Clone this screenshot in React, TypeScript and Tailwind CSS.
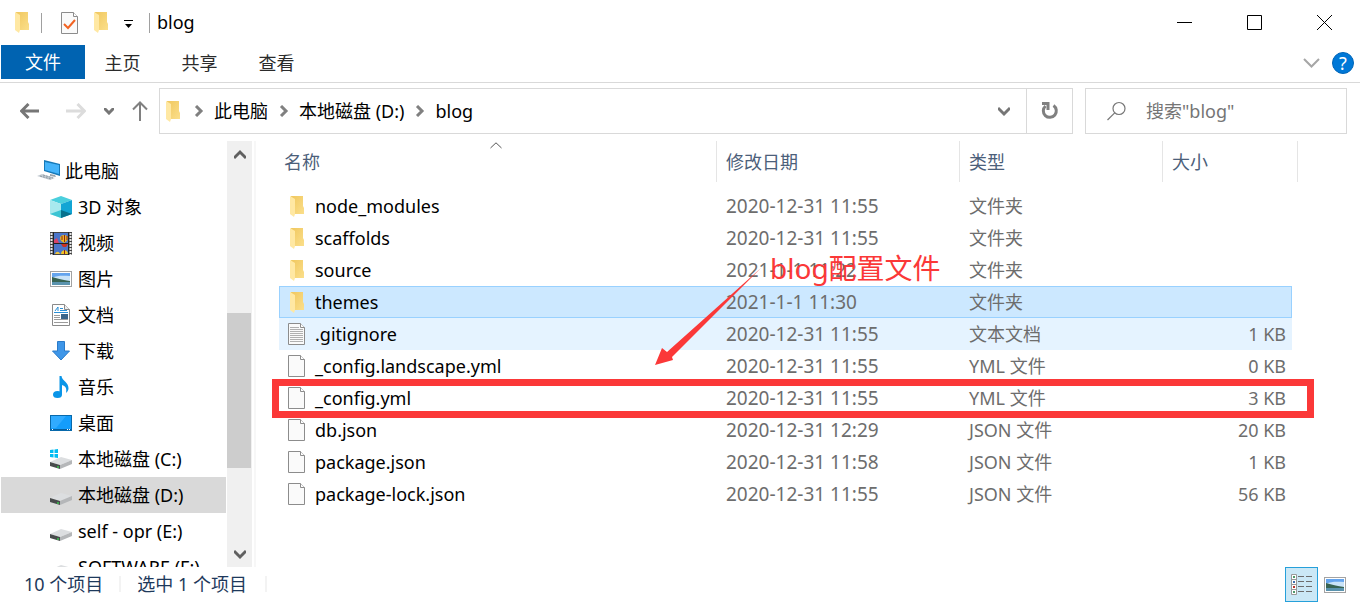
import type { ReactNode } from 'react';

interface FileRow {
  name: string;
  date: string;
  type: string;
  size?: string;
  icon: 'folder' | 'text' | 'blank';
  state?: 'selected' | 'hover' | 'marked';
}

const files: FileRow[] = [
  { name: 'node_modules', date: '2020-12-31 11:55', type: '文件夹', icon: 'folder' },
  { name: 'scaffolds', date: '2020-12-31 11:55', type: '文件夹', icon: 'folder' },
  { name: 'source', date: '2021-1-1 11:22', type: '文件夹', icon: 'folder' },
  { name: 'themes', date: '2021-1-1 11:30', type: '文件夹', icon: 'folder', state: 'selected' },
  { name: '.gitignore', date: '2020-12-31 11:55', type: '文本文档', size: '1 KB', icon: 'text', state: 'hover' },
  { name: '_config.landscape.yml', date: '2020-12-31 11:55', type: 'YML 文件', size: '0 KB', icon: 'blank' },
  { name: '_config.yml', date: '2020-12-31 11:55', type: 'YML 文件', size: '3 KB', icon: 'blank', state: 'marked' },
  { name: 'db.json', date: '2020-12-31 12:29', type: 'JSON 文件', size: '20 KB', icon: 'blank' },
  { name: 'package.json', date: '2020-12-31 11:58', type: 'JSON 文件', size: '1 KB', icon: 'blank' },
  { name: 'package-lock.json', date: '2020-12-31 11:55', type: 'JSON 文件', size: '56 KB', icon: 'blank' },
];

function FolderIcon() {
  return (
    <svg width="14" height="21" viewBox="0 0 14 21" className="shrink-0">
      <defs>
        <linearGradient id="folderBack" x1="0" y1="0" x2="1" y2="1">
          <stop offset="0" stopColor="#f0c75e" />
          <stop offset="1" stopColor="#fbdf8b" />
        </linearGradient>
      </defs>
      <path d="M1 0H13V10L14 12V18H3Z" fill="url(#folderBack)" />
      <path d="M0 0L5 3V18L4 21L0 18Z" fill="#ffe8a3" />
    </svg>
  );
}

function PageIcon({ lines = false, check = false }: { lines?: boolean; check?: boolean }) {
  return (
    <svg width="17" height="22" viewBox="0 0 17 22" className="shrink-0" fill="none">
      <path d="M.5 .5H12.5L16.5 4.5V21.5H.5Z" fill="#fafafa" stroke="#8c8c8c" />
      <path d="M12.5 .5V4.5H16.5" fill="#fff" stroke="#8c8c8c" />
      {lines && <path d="M2 4.5H11M2 6.5H15M2 8.5H15M2 10.5H15M2 12.5H15M2 14.5H15M2 16.5H15M2 18.5H15" stroke="#b0b0b0" />}
      {check && <path d="M3 12L7 16L14 8" stroke="#f26322" strokeWidth="2" />}
    </svg>
  );
}

function Chevron({ dir, className = '' }: { dir: 'right' | 'down' | 'up'; className?: string }) {
  const paths = { right: 'M3 1L8 6L3 11', down: 'M0 3L6 9L12 3', up: 'M0 9L6 3L12 9' };
  return (
    <svg width="12" height="12" viewBox="0 0 12 12" fill="none" className={`shrink-0 ${className}`}>
      <path d={paths[dir]} stroke="currentColor" strokeWidth="3" />
    </svg>
  );
}

function PictureIcon() {
  return (
    <svg width="22" height="16" viewBox="0 0 22 16">
      <rect x=".5" y=".5" width="21" height="15" fill="#fff" stroke="#a3a3a3" />
      <rect x="2" y="2" width="18" height="12" fill="#64a4ee" />
      <path d="M2 7C8 4 14 5 20 5V11H2Z" fill="#c9e3f8" />
      <path d="M2 6C7 7 11 9 20 10V11H2Z" fill="#376352" />
      <path d="M2 11H20V14H2Z" fill="#5a93ae" />
    </svg>
  );
}

function DriveIcon({ windows = false }: { windows?: boolean }) {
  return (
    <svg width="22" height="20" viewBox="0 0 22 20">
      <path d="M0 13L11 8L22 11L10 16Z" fill="#dcdee0" />
      <path d="M0 13L10 16V20L0 17Z" fill="#484b4c" />
      <path d="M10 16L22 11V15L10 20Z" fill="#b5b7b9" />
      <path d="M7 17H9V19H7Z" fill="#3ba64b" />
      {windows && <path d="M0 1L3.5 .5V4H0ZM4.5 .4L8 0V4H4.5ZM0 5H3.5V8.5L0 8ZM4.5 5H8V9L4.5 8.6Z" fill="#00bcf2" />}
    </svg>
  );
}

function ComputerIcon() {
  return (
    <svg width="24" height="22" viewBox="0 0 24 22">
      <path d="M7 0L23 4V16L7 11Z" fill="#1679b8" />
      <path d="M8 2L22 5V14L8 10Z" fill="#45b4fa" />
      <path d="M13 14L18 15L19 17L13 16Z" fill="#9aa4ac" />
      <path d="M0 16L5 14L18 18L13 20Z" fill="#c5ccd2" />
      <path d="M3 16L14 19M6 15L16 18" stroke="#8c99a3" strokeDasharray="2 1" />
    </svg>
  );
}

function CubeIcon() {
  return (
    <svg width="22" height="22" viewBox="0 0 22 22">
      <path d="M11 0L22 4L11 8L0 4Z" fill="#4bcfdd" />
      <path d="M0 4L11 8V22L0 18Z" fill="#a8e9ee" />
      <path d="M11 8L22 4V18L11 22Z" fill="#12a5d4" />
      <path d="M0 18L11 14V22Z" fill="#3bc4d3" />
      <path d="M11 14L22 18L11 22Z" fill="#06718d" />
    </svg>
  );
}

function VideoIcon() {
  return (
    <svg width="22" height="23" viewBox="0 0 22 23">
      <rect width="22" height="23" fill="#444" />
      <path d="M1.5 1V23M20.5 1V23" stroke="#e8e8e8" strokeWidth="2" strokeDasharray="2 1" />
      <rect x="4" y="1" width="14" height="10" fill="#4b75c8" />
      <rect x="4" y="12" width="14" height="10" fill="#4b75c8" />
      <path d="M4 8L7 6L9 11H4Z" fill="#d5446a" />
      <path d="M10 6C10 2 18 2 18 6C18 8 16 10 14 11C12 10 10 8 10 6Z" fill="#e9b520" />
      <path d="M12 4V8M14.5 3V10M17 4V8" stroke="#8f231b" />
      <path d="M11 12H18L16 15H13Z" fill="#c93121" />
      <path d="M11 22C11 17 18 17 18 22Z" fill="#f0c423" />
      <path d="M14.500 18V22" stroke="#8f231b" />
      <path d="M5 22C6 19 9 19 10 22Z" fill="#ecc43e" />
      <path d="M3.5 0V23M18.5 0V23M3 11.5H19" stroke="#222" />
    </svg>
  );
}

function DocumentIcon() {
  return (
    <svg width="18" height="22" viewBox="0 0 18 22">
      <path d="M.5 .5H12.5L17.5 5.5V21.5H.5Z" fill="#fff" stroke="#8a8a8a" />
      <path d="M12.5 .5V5.5H17.5" fill="#eee" stroke="#8a8a8a" />
      <path d="M3 7L6 3V7M8 4.5H11M8 6.5H15M2 8.5H16" fill="none" stroke="#2a8fd5" />
      <path d="M2 11.5H8M2 13.5H8M2 15.5H16M2 18.5H16" stroke="#9b9b9b" />
      <rect x="9" y="10" width="7" height="5" fill="#3a6589" />
    </svg>
  );
}

function DownloadIcon() {
  return (
    <svg width="18" height="20" viewBox="0 0 18 20">
      <path d="M5.5 .5H12.5V10H17.5L9 19L.5 10H5.5Z" fill="#3e96e8" stroke="#2a7bc9" />
    </svg>
  );
}

function MusicIcon() {
  return (
    <svg width="16" height="22" viewBox="0 0 16 22">
      <ellipse cx="4.5" cy="18.5" rx="4.5" ry="3.5" fill="#0a95e8" />
      <path d="M6.5 0H8.5C9 5 16 6 15.5 13C15 15 14 16 13 17C14 12 12.5 10 9 9V18.5H6.5Z" fill="#0a95e8" />
    </svg>
  );
}

function DesktopIcon() {
  return (
    <svg width="22" height="16" viewBox="0 0 22 16">
      <rect x=".5" y=".5" width="21" height="15" fill="#149dfb" stroke="#0869ab" />
      <path d="M1 1H16L6 13H1Z" fill="#31abff" />
      <path d="M1 14.5H21" stroke="#075d9b" />
      <path d="M2 14.5H3M17 14.5H18M19 14.5H20" stroke="#fff" />
    </svg>
  );
}

const places: { label: string; icon: ReactNode; active?: boolean }[] = [
  { label: '3D 对象', icon: <CubeIcon /> },
  { label: '视频', icon: <VideoIcon /> },
  { label: '图片', icon: <PictureIcon /> },
  { label: '文档', icon: <DocumentIcon /> },
  { label: '下载', icon: <DownloadIcon /> },
  { label: '音乐', icon: <MusicIcon /> },
  { label: '桌面', icon: <DesktopIcon /> },
  { label: '本地磁盘 (C:)', icon: <DriveIcon windows /> },
  { label: '本地磁盘 (D:)', icon: <DriveIcon />, active: true },
  { label: 'self - opr (E:)', icon: <DriveIcon /> },
  { label: 'SOFTWARE (F:)', icon: <DriveIcon /> },
];

function TitleBar() {
  return (
    <header className="flex h-[45px] shrink-0 items-center justify-between">
      <div className="flex items-center pl-[15px]">
        <FolderIcon />
        <span className="ml-3 h-5 w-px bg-[#a0a0a0]" />
        <button aria-label="属性" className="ml-[19px]"><PageIcon check /></button>
        <button aria-label="新建文件夹" className="ml-4"><FolderIcon /></button>
        <button aria-label="自定义快速访问工具栏" className="ml-4 pt-1">
          <svg width="9" height="9" viewBox="0 0 9 9"><path d="M0 0H9V1H0ZM1 4H8L4.5 8Z" /></svg>
        </button>
        <span className="ml-4 h-5 w-px bg-[#a0a0a0]" />
        <h1 className="ml-[7px] pb-0.5">blog</h1>
      </div>
      <div className="flex pr-px">
        <button aria-label="最小化" className="flex h-[45px] w-[70px] items-center justify-center">
          <svg width="15" height="15" viewBox="0 0 15 15"><path d="M0 7.5H15" stroke="#000" /></svg>
        </button>
        <button aria-label="最大化" className="flex h-[45px] w-[70px] items-center justify-center">
          <svg width="15" height="15" viewBox="0 0 15 15"><path d="M.5 .5H14.5V14.5H.5Z" fill="none" stroke="#000" /></svg>
        </button>
        <button aria-label="关闭" className="flex h-[45px] w-[70px] items-center justify-center">
          <svg width="15" height="15" viewBox="0 0 15 15"><path d="M0 0L15 15M15 0L0 15" stroke="#000" /></svg>
        </button>
      </div>
    </header>
  );
}

function Ribbon() {
  return (
    <div className="flex h-[38px] shrink-0 items-start justify-between border-b border-[#d9d9d9] pl-px">
      <div className="flex">
        <button className="h-[34px] w-[84px] bg-[#0063b1] text-white">文件</button>
        {['主页', '共享', '查看'].map((tab) => (
          <button key={tab} className="h-9 w-[77px] pr-0.5 text-[#2b2b2b]">{tab}</button>
        ))}
      </div>
      <div className="flex h-9 items-center gap-3 pr-[6px]">
        <button aria-label="展开功能区">
          <svg width="17" height="10" viewBox="0 0 17 10"><path d="M1 1L8.5 8.5L16 1" fill="none" stroke="#a6a6a6" strokeWidth="2" /></svg>
        </button>
        <button aria-label="帮助" className="h-[22px] w-[22px] rounded-full border border-[#0065b8] bg-[#0078d7] text-lg leading-5 text-white">?</button>
      </div>
    </div>
  );
}

function AddressRow() {
  const crumbs = ['此电脑', '本地磁盘 (D:)', 'blog'];
  return (
    <div className="flex h-[58px] shrink-0 items-start pt-[5px] pr-[13px]">
      <div className="flex h-[46px] w-[159px] shrink-0 items-center pl-5">
        <button aria-label="后退">
          <svg width="20" height="16" viewBox="0 0 20 16" fill="none" stroke="#767676" strokeWidth="3"><path d="M19 8H2M8.5 1L1.5 8L8.5 15" /></svg>
        </button>
        <button aria-label="前进" className="ml-[26px]">
          <svg width="20" height="16" viewBox="0 0 20 16" fill="none" stroke="#dcdcdc" strokeWidth="3"><path d="M0 8H18M11.5 1L18.5 8L11.5 15" /></svg>
        </button>
        <button aria-label="最近位置" className="ml-[18px]">
          <svg width="10" height="7" viewBox="0 0 10 7" fill="none" stroke="#767676" strokeWidth="3"><path d="M0 0L5 5L10 0" /></svg>
        </button>
        <button aria-label="上移" className="ml-[18px]">
          <svg width="16" height="20" viewBox="0 0 16 20" fill="none" stroke="#808080" strokeWidth="2"><path d="M8 20V2M1 8.5L8 1.5L15 8.5" /></svg>
        </button>
      </div>
      <div className="flex h-[46px] flex-1 border border-[#d9d9d9]">
        <nav className="flex flex-1 items-center pl-[6px]">
          <FolderIcon />
          {crumbs.map((crumb) => (
            <span key={crumb} className="flex items-center">
              <Chevron dir="right" className="mr-[9px] ml-[13px] text-[#808080]" />
              <button className="-mr-[3px] pb-px">{crumb}</button>
            </span>
          ))}
        </nav>
        <button aria-label="以前的位置" className="px-4 text-[#767676]"><Chevron dir="down" /></button>
        <button aria-label="刷新" className="flex w-[46px] items-center justify-center border-l border-[#d9d9d9]">
          <svg width="18" height="18" viewBox="0 0 18 18" fill="none">
            <path d="M12.500 3.500A6.500 6.500 0 1 1 4.500 4" stroke="#808080" strokeWidth="3" />
            <path d="M1 1.500H7V8" stroke="#808080" strokeWidth="3" />
          </svg>
        </button>
      </div>
      <label className="ml-3 flex h-[46px] w-[262px] items-center border border-[#d9d9d9] pl-[21px]">
        <svg width="20" height="20" viewBox="0 0 20 20" fill="none" stroke="#777" strokeWidth="1.2" className="shrink-0">
          <circle cx="12" cy="7.5" r="6" />
          <path d="M7.7 11.8L.5 19" />
        </svg>
        <input aria-label="搜索" placeholder={'搜索"blog"'} className="ml-[19px] w-full min-w-0 outline-none placeholder:text-[#757575]" />
      </label>
    </div>
  );
}

function Sidebar() {
  return (
    <aside className="flex w-[256px] shrink-0 border-r-2 border-[#f7f7f7]">
      <ul className="flex-1 overflow-hidden pt-3 pl-px">
        <li>
          <button className="flex h-9 w-full items-center gap-1 pl-9"><ComputerIcon />此电脑</button>
        </li>
        {places.map(({ label, icon, active }) => (
          <li key={label}>
            <button className={`flex h-9 w-full items-center pl-12 whitespace-nowrap ${active ? 'bg-[#d9d9d9]' : ''}`}>
              <span className="mr-[5px] flex w-6 shrink-0 justify-center">{icon}</span>
              {label}
            </button>
          </li>
        ))}
      </ul>
      <div className="mr-0.5 ml-px flex w-[25px] flex-col items-center bg-[#f0f0f0] text-[#606060]">
        <button aria-label="向上滚动" className="flex h-[27px] items-center"><Chevron dir="up" /></button>
        <div className="grow-[145]" />
        <div className="mr-px w-6 grow-[155] bg-[#cdcdcd]" />
        <div className="grow-[72]" />
        <button aria-label="向下滚动" className="flex h-[27px] items-center"><Chevron dir="down" /></button>
      </div>
    </aside>
  );
}

const rowStyles = {
  selected: 'bg-[#cce8ff] border-[#99d1ff]',
  hover: 'bg-[#e5f3ff] border-[#e5f3ff]',
  marked: 'border-transparent',
};

function FileList() {
  return (
    <main className="relative flex-1 overflow-hidden pr-[62px] pl-[23px]">
      <table className="w-full table-fixed border-separate border-spacing-0 text-left">
        <colgroup>
          <col />
          <col className="w-[243px]" />
          <col className="w-[203px]" />
          <col className="w-[129px]" />
          <col className="w-[6px]" />
        </colgroup>
        <thead>
          <tr className="h-[41px] text-[#4c607a]">
            <th className="relative border-r border-[#e5e5e5] p-0 pl-[5px] font-normal">
              名称
              <svg width="12" height="7" viewBox="0 0 12 7" className="absolute top-px left-1/2 -ml-2" fill="none"><path d="M.5 6L6 .8L11.5 6" stroke="#555" /></svg>
            </th>
            <th className="border-r border-[#e5e5e5] p-0 pl-[9px] font-normal">修改日期</th>
            <th className="border-r border-[#e5e5e5] p-0 pl-[9px] font-normal">类型</th>
            <th colSpan={2} className="border-r border-[#e5e5e5] p-0 pl-[9px] font-normal">大小</th>
          </tr>
        </thead>
        <tbody className="before:block before:h-2">
          {files.map((file) => {
            const tone = file.state ? rowStyles[file.state] : 'border-transparent';
            return (
              <tr key={file.name} className="relative h-8 text-[#6d6d6d]">
                <td className={`border-y border-l p-0 pl-2 text-black ${tone}`}>
                  <div className="flex items-center">
                    <span className="mr-2.5 flex w-[17px] justify-center">
                      {file.icon === 'folder' ? <FolderIcon /> : <PageIcon lines={file.icon === 'text'} />}
                    </span>
                    {file.name}
                  </div>
                  {file.state === 'marked' && (
                    <div className="pointer-events-none absolute -top-[3px] -right-[16px] -bottom-1 -left-[7px] border-7 border-[#fb3838]" />
                  )}
                </td>
                <td className={`border-y p-0 pl-[9px] text-[19px] ${tone}`}>{file.date}</td>
                <td className={`border-y p-0 pl-[9px] ${tone}`}>{file.type}</td>
                <td className={`border-y border-r p-0 pr-[5px] text-right ${tone}`}>{file.size}</td>
                <td className="p-0" />
              </tr>
            );
          })}
        </tbody>
      </table>
      {/* red note pointing at the config files */}
      <svg width="108" height="100" viewBox="0 0 108 100" className="pointer-events-none absolute top-[126px] left-[398px]">
        <path d="M1 98L8 81L13 85L107 1L18 90L19 93Z" fill="#fb3838" />
      </svg>
      <p className="pointer-events-none absolute top-[107px] left-[514px] text-[28px] leading-10 whitespace-nowrap text-[#fb3838]">blog配置文件</p>
    </main>
  );
}

function StatusBar() {
  return (
    <footer className="flex h-9 shrink-0 items-start justify-between pl-6 text-[#1e395b]">
      <div className="flex h-[34px] items-center">
        <span>10 个项目</span>
        <span className="mx-4 h-4 w-0.5 bg-[#f3f3f3]" />
        <span>选中 1 个项目</span>
        <span className="ml-[18px] h-4 w-0.5 bg-[#f3f3f3]" />
      </div>
      <div className="flex items-center pr-[14px]">
        <button aria-label="详细信息" className="flex h-[35px] w-[33px] items-center justify-center border border-[#26a0da] bg-[#cbe8f6]">
          <svg width="21" height="21" viewBox="0 0 21 21" fill="none">
            <path d="M.5 .5H5.5V20.5H.5ZM.5 5.5H5.5M.5 10.5H5.5M.5 15.5H5.5" fill="#fff" stroke="#999" />
            <path d="M2 3H4M2 18H4" stroke="#4e9a6a" strokeWidth="2" />
            <path d="M2 8H4" stroke="#3d6fb0" strokeWidth="2" />
            <path d="M2 13H4" stroke="#b8312b" strokeWidth="2" />
            <path d="M7 2.5H13M15 2.5H21M7 7.5H13M15 7.5H21M7 12.5H13M15 12.5H21M7 17.5H13M15 17.5H21" stroke="#6d6d6d" />
          </svg>
        </button>
        <button aria-label="大图标" className="ml-1.5"><PictureIcon /></button>
      </div>
    </footer>
  );
}

export default function App() {
  return (
    <div className="flex h-screen flex-col overflow-hidden bg-white font-['Noto_Sans','Noto_Sans_CJK_SC',sans-serif] text-lg leading-6 text-black">
      <TitleBar />
      <Ribbon />
      <AddressRow />
      <div className="flex min-h-0 flex-1">
        <Sidebar />
        <FileList />
      </div>
      <StatusBar />
    </div>
  );
}
